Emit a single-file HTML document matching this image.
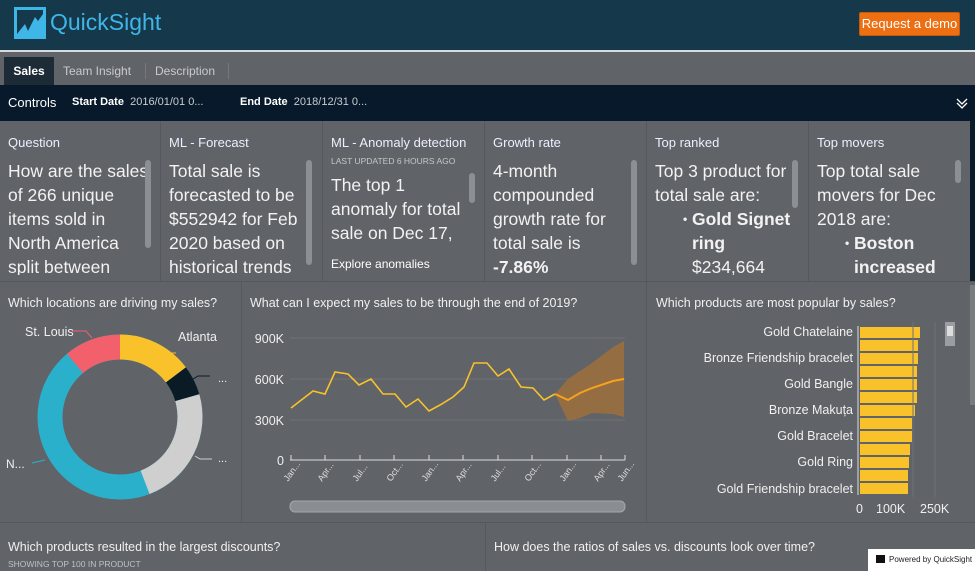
<!DOCTYPE html>
<html><head><meta charset="utf-8"><style>
*{margin:0;padding:0;box-sizing:border-box}
body{width:975px;height:571px;overflow:hidden;background:#606367;font-family:"Liberation Sans",sans-serif;color:#fff;position:relative}
.abs{position:absolute}
.hdr{left:0;top:0;width:975px;height:50px;background:#15394b}
.tabs{left:0;top:50px;width:975px;height:35px;background:#606367;border-top:2px solid #d8dcdf}
.ctrl{left:0;top:85px;width:975px;height:36px;background:#07192a}
.card{top:121px;height:160px;border-right:1px solid #55585c;background:#606367}
.card .t{position:absolute;left:8px;top:14px;font-size:13px;color:#eef}
.card .b{position:absolute;left:8px;top:38px;font-size:17.5px;line-height:24px;color:#f2f2f2;height:116px;overflow:hidden;width:138px;white-space:nowrap}
.sb{position:absolute;width:6px;border-radius:3px;background:#8c8f93}
.lbl{font-size:12.5px;color:#f0f0f0}
</style></head><body>
<div class="abs hdr"></div>
<svg class="abs" style="left:14px;top:7px" width="32" height="32" viewBox="0 0 32 32"><rect width="32" height="32" fill="#3fb6e8"/><path d="M3 3H29V7L24 14 21 10 14 24 11 17 3 27Z" fill="#15394b"/></svg>
<div class="abs" style="left:50px;top:9px;font-size:23px;color:#3fb6e8">QuickSight</div>
<div class="abs" style="left:859px;top:12px;width:101px;height:24px;background:#ec6f13;border:1px solid #c65a08;border-radius:2px;font-size:13px;line-height:22px;text-align:center;color:#fff">Request a demo</div>
<div class="abs tabs"></div>
<div class="abs" style="left:4px;top:57px;width:50px;height:28px;background:#1d2b37;font-size:12px;font-weight:bold;line-height:28px;text-align:center">Sales</div>
<div class="abs" style="left:63px;top:64px;font-size:12px;color:#c9cbce">Team Insight</div>
<div class="abs" style="left:145px;top:63px;width:1px;height:16px;background:#777"></div>
<div class="abs" style="left:155px;top:64px;font-size:12px;color:#c9cbce">Description</div>
<div class="abs" style="left:228px;top:63px;width:1px;height:16px;background:#777"></div>
<div class="abs ctrl"></div>
<div class="abs" style="left:8px;top:95px;font-size:13px">Controls</div>
<div class="abs" style="left:72px;top:96px;font-size:11px"><b>Start Date</b> <span style="color:#c8ccd0">&nbsp;2016/01/01 0...</span></div>
<div class="abs" style="left:240px;top:96px;font-size:11px"><b>End Date</b> <span style="color:#c8ccd0">&nbsp;2018/12/31 0...</span></div>
<svg class="abs" style="left:955px;top:96px" width="14" height="14" viewBox="0 0 14 14"><path d="M2 3L7 8 12 3M2 7L7 12 12 7" stroke="#fff" stroke-width="1.3" fill="none"/></svg>

<div class="abs card" style="left:0;width:161px"><div class="t">Question</div><div class="b">How are the sales<br>of 266 unique<br>items sold in<br>North America<br>split between</div><div class="sb" style="left:145px;top:39px;height:88px"></div></div>
<div class="abs card" style="left:161px;width:162px"><div class="t">ML - Forecast</div><div class="b">Total sale is<br>forecasted to be<br>$552942 for Feb<br>2020 based on<br>historical trends</div><div class="sb" style="left:145px;top:39px;height:105px"></div></div>
<div class="abs card" style="left:323px;width:162px"><div class="t">ML - Anomaly detection</div><div class="abs" style="left:8px;top:35px;font-size:8.5px;color:#c5c8cb">LAST UPDATED 6 HOURS AGO</div><div class="b" style="top:52px;height:78px">The top 1<br>anomaly for total<br>sale on Dec 17,<br>2018 ...</div><div class="abs" style="left:8px;top:136px;font-size:12px">Explore anomalies</div><div class="sb" style="left:146px;top:52px;height:30px"></div></div>
<div class="abs card" style="left:485px;width:162px"><div class="t">Growth rate</div><div class="b">4-month<br>compounded<br>growth rate for<br>total sale is<br><b>-7.86%</b></div><div class="sb" style="left:146px;top:39px;height:105px"></div></div>
<div class="abs card" style="left:647px;width:162px"><div class="t">Top ranked</div><div class="b" style="width:146px">Top 3 product for<br>total sale are:<div style="padding-left:37px;position:relative"><span style="position:absolute;left:28px;font-size:12px;font-weight:bold">•</span><b>Gold Signet<br>ring</b><br>$234,664</div></div><div class="sb" style="left:145px;top:39px;height:48px"></div></div>
<div class="abs card" style="left:809px;width:162px"><div class="t">Top movers</div><div class="b">Top total sale<br>movers for Dec<br>2018 are:<div style="padding-left:37px;position:relative"><span style="position:absolute;left:28px;font-size:12px;font-weight:bold">•</span><b>Boston<br>increased</b></div></div><div class="sb" style="left:146px;top:39px;height:23px"></div></div>
<div class="abs" style="left:970px;top:121px;width:5px;height:160px;background:#0a1b2a"></div>
<div class="abs" style="left:970px;top:285px;width:5px;height:120px;background:#7a7d80"></div>

<div class="abs" style="left:0;top:281px;width:975px;height:1px;background:#55585c"></div>
<div class="abs" style="left:241px;top:282px;width:1px;height:241px;background:#55585c"></div>
<div class="abs" style="left:646px;top:282px;width:1px;height:241px;background:#55585c"></div>
<div class="abs" style="left:0;top:522px;width:975px;height:1px;background:#55585c"></div>
<div class="abs" style="left:485px;top:523px;width:1px;height:48px;background:#55585c"></div>

<div class="abs lbl" style="left:8px;top:296px">Which locations are driving my sales?</div>
<div class="abs lbl" style="left:250px;top:296px">What can I expect my sales to be through the end of 2019?</div>
<div class="abs lbl" style="left:656px;top:296px">Which products are most popular by sales?</div>
<div class="abs lbl" style="left:8px;top:540px">Which products resulted in the largest discounts?</div>
<div class="abs" style="left:8px;top:559px;font-size:8.5px;color:#bfc2c5">SHOWING TOP 100 IN PRODUCT</div>
<div class="abs lbl" style="left:494px;top:540px">How does the ratios of sales vs. discounts look over time?</div>
<div class="abs" style="left:868px;top:549px;width:107px;height:22px;background:#fff;font-size:8px;color:#222;line-height:22px;padding-left:8px"><span style="display:inline-block;width:9px;height:8px;background:#111;vertical-align:-1px;margin-right:4px"></span>Powered by QuickSight</div>

<svg class="abs" style="left:0;top:282px" width="241" height="240">
<g transform="translate(120,135)" fill="none" stroke-width="25">
<circle r="70" stroke="#2bb0cc"/>
<path d="M0 -70 A70 70 0 0 1 55.9 -42.1" stroke="#f9c22b"/>
<path d="M55.9 -42.1 A70 70 0 0 1 67.3 -19.3" stroke="#0a1b26"/>
<path d="M67.3 -19.3 A70 70 0 0 1 25.1 65.3" stroke="#cfcfcf"/>
<path d="M-45 -53.6 A70 70 0 0 1 0 -70" stroke="#f2606c"/>
</g>
<g fill="none" stroke-width="1">
<path d="M72 49H86L92 56" stroke="#f2606c"/><path d="M164 72L170 71H176" stroke="#f9c22b"/>
<path d="M193 97L198 94H210" stroke="#0a1b26"/><path d="M195 174L200 177H212" stroke="#cfcfcf"/>
<path d="M45 178L32 181" stroke="#2bb0cc"/></g>
<text x="25" y="54" fill="#f0f0f0" font-size="12.5" font-family="Liberation Sans">St. Louis</text>
<text x="178" y="59" fill="#f0f0f0" font-size="12.5" font-family="Liberation Sans">Atlanta</text>
<text x="218" y="100" fill="#f0f0f0" font-size="11" font-family="Liberation Sans">...</text>
<text x="218" y="180" fill="#f0f0f0" font-size="11" font-family="Liberation Sans">...</text>
<text x="6" y="186" fill="#f0f0f0" font-size="12" font-family="Liberation Sans">N...</text>
</svg>

<svg class="abs" style="left:242px;top:282px" width="404" height="240" font-family="Liberation Sans">
<g stroke="#6f7276"><line x1="48" y1="56" x2="383" y2="56"/><line x1="48" y1="97" x2="383" y2="97"/><line x1="48" y1="138" x2="383" y2="138"/></g>
<g fill="#f0f0f0" font-size="12.5" text-anchor="end"><text x="42" y="61">900K</text><text x="42" y="102">600K</text><text x="42" y="143">300K</text><text x="42" y="183">0</text></g>
<line x1="48" y1="178" x2="383" y2="178" stroke="#ddd"/>
<g stroke="#ddd">
<line x1="49" y1="173" x2="49" y2="178"/><line x1="83" y1="173" x2="83" y2="178"/><line x1="118" y1="173" x2="118" y2="178"/><line x1="152" y1="173" x2="152" y2="178"/><line x1="187" y1="173" x2="187" y2="178"/><line x1="221" y1="173" x2="221" y2="178"/><line x1="256" y1="173" x2="256" y2="178"/><line x1="290" y1="173" x2="290" y2="178"/><line x1="325" y1="173" x2="325" y2="178"/><line x1="359" y1="173" x2="359" y2="178"/><line x1="383" y1="173" x2="383" y2="178"/></g>
<g fill="#ddd" font-size="9">
<text transform="translate(46,200) rotate(-55)">Jan...</text><text transform="translate(80,200) rotate(-55)">Apr...</text><text transform="translate(115,200) rotate(-55)">Jul...</text><text transform="translate(149,200) rotate(-55)">Oct...</text><text transform="translate(184,200) rotate(-55)">Jan...</text><text transform="translate(218,200) rotate(-55)">Apr...</text><text transform="translate(253,200) rotate(-55)">Jul...</text><text transform="translate(287,200) rotate(-55)">Oct...</text><text transform="translate(322,200) rotate(-55)">Jan...</text><text transform="translate(356,200) rotate(-55)">Apr...</text><text transform="translate(380,200) rotate(-55)">Jun...</text></g>
<path d="M313 112L326 97 350 81 371 65 382 59V135L371 132 350 131 338 136 326 139Z" fill="#9a6f3e" opacity="0.9"/>
<polyline fill="none" stroke="#f9c22b" stroke-width="1.6" points="49,126 71,109 83,112 93,90 106,92 117,103 129,97 141,112 153,112 164,125 176,117 187,129 198,123 211,115 222,105 232,81 245,81 256,94 267,87 279,105 291,106 302,118 313,112"/>
<polyline fill="none" stroke="#f7a21b" stroke-width="2" points="313,112 326,118 338,111 350,106 371,99 382,97"/>
<rect x="48" y="219" width="335" height="11" rx="5" fill="#8a8d91" stroke="#a5a8ab"/>
</svg>

<svg class="abs" style="left:647px;top:282px" width="323" height="240" font-family="Liberation Sans">
<g fill="#f9c22b">
<rect x="213" y="45" width="60" height="11"/><rect x="213" y="58" width="58" height="11"/><rect x="213" y="71" width="58" height="11"/><rect x="213" y="84" width="57" height="11"/><rect x="213" y="97" width="57" height="11"/><rect x="213" y="110" width="57" height="11"/><rect x="213" y="123" width="55" height="11"/><rect x="213" y="136" width="52" height="11"/><rect x="213" y="149" width="52" height="11"/><rect x="213" y="162" width="50" height="11"/><rect x="213" y="175" width="49" height="11"/><rect x="213" y="188" width="48" height="11"/><rect x="213" y="201" width="48" height="11"/></g>
<line x1="211" y1="44" x2="211" y2="213" stroke="#ddd"/>
<line x1="266" y1="40" x2="266" y2="215" stroke="#6f7276"/>
<line x1="288" y1="40" x2="288" y2="215" stroke="#6f7276"/>
<g fill="#f0f0f0" font-size="12.5" text-anchor="end">
<text x="206" y="54">Gold Chatelaine</text><text x="206" y="80">Bronze Friendship bracelet</text><text x="206" y="106">Gold Bangle</text><text x="206" y="132">Bronze Makuța</text><text x="206" y="158">Gold Bracelet</text><text x="206" y="184">Gold Ring</text><text x="206" y="211">Gold Friendship bracelet</text></g>
<g fill="#f0f0f0" font-size="12.5"><text x="209" y="231">0</text><text x="229" y="231">100K</text><text x="273" y="231">250K</text></g>
<rect x="298" y="40" width="10" height="24" fill="#9a9da1"/>
<rect x="300" y="44" width="6" height="10" fill="#ddd"/>
</svg>
</body></html>
